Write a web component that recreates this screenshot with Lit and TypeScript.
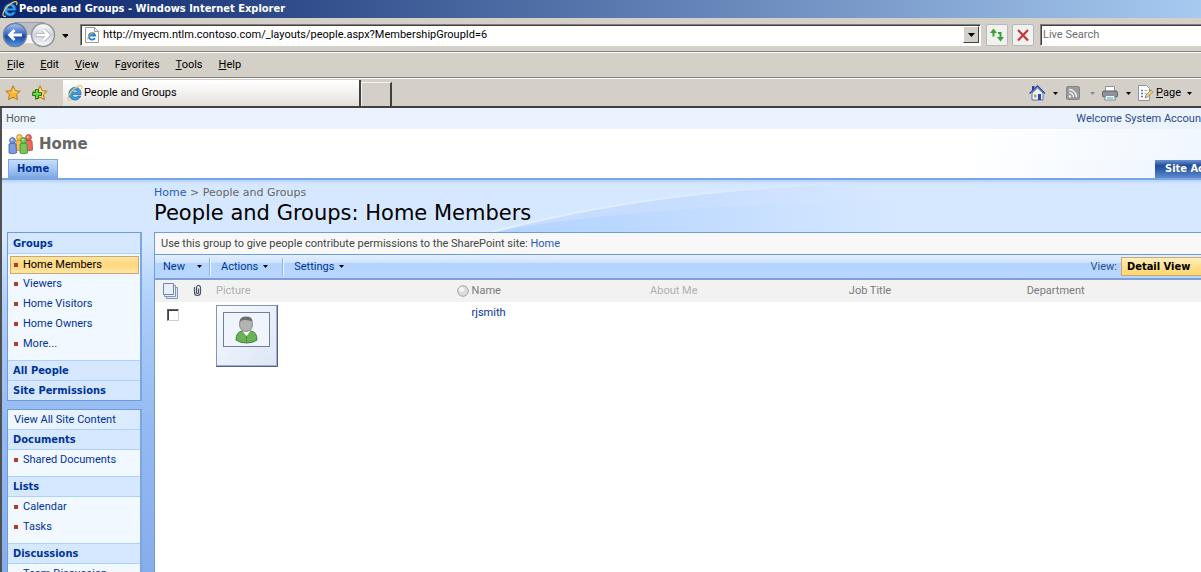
import { LitElement, html, css, svg, nothing } from "lit";
import { customElement } from "lit/decorators.js";

const ieLogo = () => html`<svg class="ie" width="16" height="16" viewBox="0 0 16 16" aria-hidden="true">
  <path d="M14 9.6H5.4c.2 3 4 3.600 5.300 1.500h3C12.400 14 10.500 15 8.300 15 4.300 15 2 12.400 2 8.700 2 5 4.700 2.400 8.300 2.400c4 0 6 3 5.700 7.200zM5.500 7.200h5.200c-.2-2.900-4.700-3-5.200 0z" fill="#35a0ec" stroke="#1558a8" stroke-width=".7"/>
  <path d="M4 15.300C1 16 .2 14 1.800 10.500 4 5.800 9.500 1 13 .7c2-.1 2.500 1.300 1.400 3.300" fill="none" stroke="#f0c860" stroke-width="1.200"/>
</svg>`;

const star = (fill: string) => svg`<path d="M8 .8l2.200 4.900 5 .5-3.700 3.500 1 5L8 12.200 3.500 14.700l1-5L.8 6.200l5-.5z" fill=${fill} stroke="#b87a20" stroke-width="1"/><path d="M8 3l1.500 3.600 3 .4-4.500.600z" fill="#ffe9a0"/>`;

const person = (x: number, y: number, light: string, dark: string) => svg`
  <path d="M${x} ${y + 7}q4-2 7 0l.5 9q-4 1.500-7.500 0z" fill=${light} stroke=${dark} stroke-width=".8"/>
  <circle cx=${x + 3.5} cy=${y + 3.5} r="2.900" fill=${light} stroke=${dark} stroke-width=".8"/>
  <circle cx=${x + 2.7} cy=${y + 2.7} r="1" fill="#fff" opacity=".6"/>`;

const GROUPS = ["Home Members", "Viewers", "Home Visitors", "Home Owners", "More..."];
const SITE = [
  { title: "Documents", items: ["Shared Documents"] },
  { title: "Lists", items: ["Calendar", "Tasks"] },
  { title: "Discussions", items: ["Team Discussion"] },
];

@customElement("browser-chrome")
class BrowserChrome extends LitElement {
  static styles = css`
    :host { display: block; background: #d4d0c8; color: #000; }
    button, input { font: inherit; color: inherit; border: 0; margin: 0; padding: 0; background: none; }
    svg { display: block; flex: none; }
    .title { height: 18px; display: flex; align-items: center; gap: 1px; padding-left: 2px; color: #fff;
      background: linear-gradient(90deg, #0a246a, #a6caf0); font: 700 11px/16px var(--bold); }
    .address { height: 33px; display: flex; align-items: center; border-bottom: 1px solid #808080; padding-left: 2px; }
    .box { display: flex; align-items: center; height: 22px; box-sizing: border-box; background: #fff;
      border: 1px solid; border-color: #808080 #fff #fff #808080; box-shadow: inset 1px 1px #404040; }
    .url { flex: 1; margin: 0 5px 0 12px; padding: 2px 1px 2px 4px; gap: 4px; }
    .url input { flex: 1; min-width: 0; }
    .drop { width: 16px; height: 17px; display: grid; place-items: center; background: #d4d0c8;
      border: 1px solid; border-color: #fff #404040 #404040 #fff; }
    .tool { width: 22px; height: 22px; margin-right: 4px; display: grid; place-items: center; background: #f1f1ee; border: 1px solid #b4b8c4; border-radius: 2px; }
    .search { width: 161px; margin-left: 2px; border-right: 0; }
    .search input { width: 100%; padding-left: 2px; }
    .search input::placeholder { color: #6d6d6d; opacity: 1; }
    .menu { height: 24px; display: flex; align-items: center; gap: 16px; padding-left: 7px; border-top: 1px solid #fff; border-bottom: 1px solid #808080; }
    .tabs { display: flex; align-items: flex-end; border-top: 1px solid #fff; border-bottom: 2px solid #404040; box-sizing: border-box; height: 30px; }
    .fav { display: flex; gap: 11px; align-self: center; padding: 0 15px 0 5px; }
    .tab { width: 298px; height: 26px; display: flex; align-items: center; gap: 1px; padding-left: 4px; box-sizing: border-box;
      background: linear-gradient(#fff, #f3f2ee 50%, #e2dfd8); border-right: 2px solid #404040; text-align: left; }
    .blank { width: 31px; height: 24px; border: 1px solid #f4f3f0; border-right: 2px solid #404040; border-bottom: 0; }
    .cmds { margin-left: auto; display: flex; align-self: center; align-items: center; padding-right: 8px; }
    .cmds button { display: flex; align-items: center; }
  `;

  render() {
    return html`
      <div class="title">${ieLogo()}<span>People and Groups - Windows Internet Explorer</span></div>
      <div class="address">
        <svg width="66" height="28" viewBox="0 0 66 28" role="img" aria-label="Back and forward">
          <defs>
            <linearGradient id="b" x2="0" y2="1"><stop stop-color="#a9c6f0" /><stop offset=".45" stop-color="#3c6cc8" /><stop offset=".55" stop-color="#1a45a4" /><stop offset="1" stop-color="#4f9cf0" /></linearGradient>
            <linearGradient id="f" x2="0" y2="1"><stop stop-color="#fff" /><stop offset=".5" stop-color="#d0d3da" /><stop offset="1" stop-color="#fbfbfd" /></linearGradient>
          </defs>
          <path d="M13 1.500h29v14h-29z" fill="#bdbdc4" stroke="#9a9ca6" />
          <path d="M13 14h29v11q-14-6-29 0z" fill="#fbfbfb" />
          <circle cx="13" cy="14" r="11.500" fill="url(#b)" stroke="#6f7f9f" stroke-width="1.500" />
          <circle cx="41" cy="14" r="11.500" fill="url(#f)" stroke="#9297a4" stroke-width="1.500" />
          <path d="M20 14H8M12.500 9L7.500 14l5 5" fill="none" stroke="#fff" stroke-width="2.800" />
          <path d="M34 14H46M41.500 9l5 5-5 5" fill="none" stroke="#a9adb8" stroke-width="4" />
          <path d="M34.500 14H46M41.500 9l5 5-5 5" fill="none" stroke="#fff" stroke-width="2.600" />
          <path d="M60 13h7l-3.500 4z" />
        </svg>
        <div class="box url">
          <svg width="14" height="16" viewBox="0 0 14 16" aria-hidden="true"><path d="M.5.5h9l4 4v11H.5z" fill="#fff" stroke="#9a9a9a" /><path d="M9.500.5v4h4" fill="none" stroke="#9a9a9a" /><path d="M9.800 11a3.200 3.200 0 1 1 .3-2.500H4" fill="none" stroke="#2380d8" stroke-width="1.900" /><path d="M2.500 12.500Q3 7 10 5" fill="none" stroke="#eeb02c" /></svg>
          <input aria-label="Address" value="http://myecm.ntlm.contoso.com/_layouts/people.aspx?MembershipGroupId=6" />
          <button class="drop" aria-label="Show addresses"><svg width="7" height="4" viewBox="0 0 7 4"><path d="M0 0h7L3.500 4z" /></svg></button>
        </div>
        <button class="tool" aria-label="Refresh"><svg width="16" height="16" viewBox="0 0 16 16"><path d="M4.500 1.500L1 6h2.500v3.500h2V6H8z" fill="#37a137" /><path d="M11.500 14.500L8 10h2.500V7H9V5h3.500v5H15z" fill="#37a137" /></svg></button>
        <button class="tool" aria-label="Stop"><svg width="14" height="14" viewBox="0 0 14 14"><path d="M2 2l10 10.500M12 2L2 12.500" stroke="#c8343c" stroke-width="2.200" /></svg></button>
        <div class="box search"><input aria-label="Search" placeholder="Live Search" /></div>
      </div>
      <nav class="menu">
        <button><u>F</u>ile</button><button><u>E</u>dit</button><button><u>V</u>iew</button><button>F<u>a</u>vorites</button><button><u>T</u>ools</button><button><u>H</u>elp</button>
      </nav>
      <div class="tabs">
        <div class="fav">
          <button aria-label="Favorites"><svg width="16" height="16" viewBox="0 0 16 16">${star("#fbb632")}</svg></button>
          <button aria-label="Add to favorites"><svg width="16" height="16" viewBox="0 0 16 16">${star("#fbc850")}<path d="M3.500 4.500h3v3h3v3h-3v3h-3v-3h-3v-3h3z" fill="#6fd04a" stroke="#1d7d1c" /></svg></button>
        </div>
        <button class="tab">${ieLogo()}<span>People and Groups</span></button>
        <button class="blank" aria-label="New tab"></button>
        <div class="cmds">
          <button aria-label="Home"><svg width="32" height="16" viewBox="0 0 32 16"><path d="M3 8v7h11V8L8.500 3z" fill="#eef2fc" stroke="#5c74ae" /><path d="M.5 8.500L8.500 1l7.500 7.500" fill="none" stroke="#2b4c9c" stroke-width="1.400" /><path d="M3 1h2.500v3L3 6z" fill="#2747a4" /><path d="M9 9h3v6H9z" fill="#2848b0" /><path d="M5 9.500h2.500v3H5z" fill="#d8963c" /><path d="M24 7h5l-2.500 3z" /></svg></button>
          <button aria-label="Feeds"><svg width="40" height="16" viewBox="0 0 40 16"><rect x="5.500" y="1.500" width="13" height="13" rx="1.500" fill="#9b9b9b" stroke="#868686" /><path d="M8 7.500a4.500 4.500 0 0 1 4.500 4.500M8 4.500a7.500 7.500 0 0 1 7.500 7.500" fill="none" stroke="#eee" stroke-width="1.500" /><circle cx="9" cy="11.500" r="1.200" fill="#eee" /><path d="M29 7h5l-2.500 3z" fill="#8a8a8a" /></svg></button>
          <button aria-label="Print"><svg width="36" height="16" viewBox="0 0 36 16"><path d="M4.500 1.500h9V7h-9z" fill="#fff" stroke="#8d93a3" /><rect x="1.500" y="6" width="15" height="6" rx="1.500" fill="#8f9199" stroke="#5c5e68" /><path d="M4.500 10.500h9l1 4.500h-11z" fill="#eaf6f4" stroke="#868e9c" /><path d="M6 13h6" stroke="#3bb5b0" /><path d="M25 7h5l-2.500 3z" /></svg></button>
          <button><svg width="19" height="16" viewBox="0 0 19 16"><path d="M1.500.5h8l3 3v12h-11z" fill="#fff" stroke="#8a93ac" /><path d="M4 5.500h2M4 8.500h2M4 11.500h2" stroke="#5676c0" stroke-width="1.500" /><path d="M7.500 5.500h3M7.500 8.500h2" stroke="#a8b4d0" /><path d="M8 13l1-3 5-5 1.800 1.800-5 5z" fill="#f4d67c" stroke="#8b7a4a" stroke-width=".8" /></svg><span><u>P</u>age</span><svg width="12" height="16" viewBox="0 0 12 16"><path d="M6 7h5L8.500 10z" /></svg></button>
        </div>
      </div>`;
  }
}

@customElement("side-nav")
class SideNav extends LitElement {
  static styles = css`
    :host { display: flex; flex-direction: column; gap: 8px; }
    .panel { border: 1px solid #6f9dd9; border-right-width: 2px; border-right-color: #7ba7e2; background: #f2f8ff; }
    h2 { margin: 0; height: 19px; padding-left: 5px; font: 700 11px/19px var(--bold); background: #d6e8ff;
      border-top: 1px solid #add1ff; border-bottom: 1px solid #add1ff; }
    h2.first { border-top: 0; height: 20px; line-height: 21px; }
    h2.solo { border-bottom: 0; }
    a { color: #003399; text-decoration: none; }
    ul { list-style: none; margin: 0; padding: 0 0 6px; }
    li { height: 20px; margin: 0 2px; display: flex; align-items: center; gap: 5px; padding-left: 4px; }
    li::before { content: ""; width: 4px; height: 4px; background: #b03c30; }
    li.on { height: 16px; margin-top: 2px; margin-right: 1px; padding-left: 3px; border: 1px solid #c9a877; background: linear-gradient(#ffe6a0, #ffd67c 50%, #ffe6a6); }
    li.on a { color: #000; }
    .all { height: 19px; line-height: 19px; padding-left: 6px; background: linear-gradient(90deg, #f2f8ff, #d9e9ff); }
  `;
  render() {
    return html`
      <nav class="panel">
        <h2 class="first"><a href="#groups">Groups</a></h2>
        <ul>${GROUPS.map((g, i) => html`<li class=${i === 0 ? "on" : nothing}><a href="#group">${g}</a></li>`)}</ul>
        <h2 class="solo"><a href="#people">All People</a></h2>
        <h2 class="solo"><a href="#permissions">Site Permissions</a></h2>
      </nav>
      <nav class="panel">
        <div class="all"><a href="#all">View All Site Content</a></div>
        ${SITE.map((s) => html`<h2><a href="#section">${s.title}</a></h2><ul>${s.items.map((t) => html`<li><a href="#item">${t}</a></li>`)}</ul>`)}
      </nav>`;
  }
}

@customElement("people-list")
class PeopleList extends LitElement {
  static styles = css`
    :host { display: flex; flex-direction: column; border: solid #6f9dd9; border-width: 1px 0 0 1px; background: #fff; }
    a { color: #2a5ac0; text-decoration: none; }
    button { font: inherit; color: #003399; border: 0; margin: 0; padding: 0; background: none; }
    .about { height: 21px; line-height: 21px; padding-left: 6px; background: #f8f8f8; color: #444; white-space: nowrap; }
    .bar { height: 23px; display: flex; align-items: center; border-top: 1px solid #6f9dd9; border-bottom: 2px solid #7d9fd3;
      background: linear-gradient(#e3efff 0, #cfe3ff 34%, #b4d4ff 36%, #b8d6ff); }
    .bar .m { display: flex; align-items: center; height: 18px; padding: 0 15px 0 8px; gap: 5px; }
    .bar .m + .m { border-left: 1px solid #eef6ff; box-shadow: -1px 0 #8fb4e8; padding-left: 10px; }
    .bar .m.new { gap: 12px; padding-right: 8px; }
    .view { margin-left: auto; color: #2c4f94; padding-right: 4px; }
    .detail { width: 80px; box-sizing: border-box; height: 19px; text-align: left; padding-left: 5px; font: 700 11px/16px var(--bold); color: #000; border: 1px solid #c9a877; border-right: 0; white-space: nowrap;
      background: linear-gradient(#ffefc0, #ffdf8c 50%, #ffd56f); }
    table { width: 100%; table-layout: fixed; border-collapse: collapse; }
    .c1 { width: 31px; } .c2 { width: 23px; } .c3 { width: 23%; } .c4 { width: 18.5%; } .c5 { width: 19%; } .c6 { width: 17%; }
    th { height: 22px; padding: 0 0 0 7px; background: #f2f2f2; color: #7a7a7a; font-weight: 400; text-align: left; }
    th.dim { color: #b0b0b0; }
    td { vertical-align: top; padding: 3px 0 0 7px; }
    svg { display: block; }
    .name { display: flex; align-items: center; gap: 3px; }
    .indent { display: inline-block; padding-left: 15px; color: #003399; }
    input { appearance: none; display: block; box-sizing: border-box; width: 12px; height: 12px; margin: 4px 0 0 5px; background: #fff;
      border: 1px solid; border-color: #606060 #d4d0c8 #d4d0c8 #606060; box-shadow: inset 1px 1px #404040; }
  `;
  arrow() {
    return html`<svg width="5" height="3" viewBox="0 0 5 3" aria-hidden="true"><path d="M0 0h5L2.500 3z" /></svg>`;
  }
  render() {
    return html`
      <div class="about">Use this group to give people contribute permissions to the SharePoint site: <a href="#home">Home</a></div>
      <div class="bar">
        <button class="m new">New ${this.arrow()}</button><button class="m">Actions ${this.arrow()}</button><button class="m">Settings ${this.arrow()}</button>
        <span class="view">View:</span><button class="detail">Detail View</button>
      </div>
      <table>
        <colgroup><col class="c1" /><col class="c2" /><col class="c3" /><col class="c4" /><col class="c5" /><col class="c6" /><col /></colgroup>
        <thead><tr>
          <th aria-label="Select"><svg width="18" height="16" viewBox="0 0 18 16"><path d="M4.500 4.500h11v11h-11z" fill="#dfe9f7" stroke="#8494b4" /><path d="M2.500 2.500h11v11h-11z" fill="#edf3fc" stroke="#8494b4" /><path d="M1.500.5h10v11h-10z" fill="#e6effb" stroke="#7184ac" /></svg></th>
          <th aria-label="Attachment"><svg width="10" height="12" viewBox="0 0 10 12"><path d="M1.500 2v5.500a3 3 0 0 0 6 0V2.500a2 2 0 0 0-4 0v5a1 1 0 0 0 2 0V3.500" fill="none" stroke="#4a5568" stroke-width="1.200" /></svg></th>
          <th class="dim">Picture</th>
          <th><span class="name"><svg width="12" height="12" viewBox="0 0 12 12"><circle cx="6" cy="6" r="5.300" fill="#dcdcdc" stroke="#a6a6a6" /><circle cx="4.500" cy="4.500" r="2.500" fill="#f5f5f5" /></svg>Name</span></th>
          <th class="dim">About Me</th><th>Job Title</th><th>Department</th>
        </tr></thead>
        <tbody><tr>
          <td><input type="checkbox" aria-label="Select rjsmith" /></td><td></td>
          <td><svg width="62" height="62" viewBox="0 0 62 62" role="img" aria-label="No photo">
            <defs><linearGradient id="p" x2="1" y2="1"><stop stop-color="#f8fbff" /><stop offset="1" stop-color="#dde5f5" /></linearGradient></defs>
            <rect x=".5" y=".5" width="61" height="61" fill="url(#p)" stroke="#8595b8" /><path d="M61.500 0v61.500H0" fill="none" stroke="#53648c" /><path d="M60.500 1v59.500H1" fill="none" stroke="#a3b0cc" />
            <rect x="7.500" y="7.500" width="46" height="34" fill="#f0f5fd" stroke="#6f7f9e" />
            <path d="M20 35q0-8 6-9h9q6 1 6 9-4 3-10.500 3T20 35z" fill="#6bb158" stroke="#3f8534" />
            <path d="M26.500 26h8L30.500 31z" fill="#fff" /><path d="M30.500 31v6" stroke="#3f8534" stroke-width=".8" />
            <ellipse cx="30" cy="19.500" rx="6.500" ry="7" fill="#b5b3b1" stroke="#888" /><path d="M23.500 17q0-5.500 6.500-5.500t6.500 5q-5-2-8-1.500-3 0-5 2z" fill="#6e6e72" />
          </svg></td>
          <td><a class="indent" href="#rjsmith">rjsmith</a></td><td></td><td></td><td></td>
        </tr></tbody>
      </table>`;
  }
}

@customElement("app-root")
class AppRoot extends LitElement {
  static styles = css`
    :host { --bold: "DejaVu Sans Condensed", "DejaVu Sans", sans-serif; display: flex; flex-direction: column; height: 100vh; overflow: hidden; font: 11px/16px Roboto, sans-serif; }
    a { text-decoration: none; color: #2a5ac0; }
    .page { flex: 1; min-height: 0; display: flex; flex-direction: column; border-left: 2px solid #505050; background: #fff; }
    .global { height: 21px; display: flex; align-items: center; justify-content: space-between; padding-left: 4px; background: #ebf3ff; white-space: nowrap; }
    .global a { color: #5a5a5a; }
    .global .user { color: #2c4a88; }
    .brand { height: 30px; display: flex; align-items: center; gap: 5px; padding-left: 6px; background: linear-gradient(90deg, #fff 80%, #f1f7ff); }
    .brand h2 { margin: 0; font: 700 15px/20px "DejaVu Sans", sans-serif; color: #666; }
    .strip { height: 19px; display: flex; justify-content: space-between; padding-left: 6px; border-bottom: 2px solid #7ba6e4; background: linear-gradient(90deg, #fff 80%, #edf5ff); }
    .tab { padding: 0 8px; box-sizing: border-box; border: 1px solid #7ba6e4; border-bottom: 0; font: 700 11px/18px var(--bold); color: #003399; background: linear-gradient(#c6dcfb, #a5c6f4 50%, #7ba6e4); }
    .actions { width: 46px; margin-top: 1px; padding: 0 0 0 10px; border: 0; font: 700 11px/18px var(--bold); color: #fff; text-align: left; white-space: nowrap; overflow: hidden; background: linear-gradient(#6a94d4 0, #24509a 30%, #2c5aa4 50%, #5c8cd0); }
    .body { flex: 1; min-height: 0; position: relative; display: grid; grid-template: 52px 1fr / 135px 1fr; column-gap: 12px; padding-left: 5px; background: linear-gradient(#b4d2fa 0, #d6e8ff 4px, #d6e8ff 60px, #b5d3fb 110px, #a8c9f7 150px, #93baf2 250px, #85aeec 390px); }
    .wave { position: absolute; left: 0; top: 0; pointer-events: none; }
    .head { grid-column: 2; position: relative; font-family: "DejaVu Sans", sans-serif; padding-top: 5px; color: #666; }
    h1 { margin: 0; font-size: 21px; line-height: 24px; font-weight: 400; color: #000; white-space: nowrap; }
    side-nav, people-list { position: relative; }
  `;
  render() {
    return html`
      <browser-chrome></browser-chrome>
      <div class="page">
        <div class="global"><a href="#home">Home</a><a class="user" href="#me">Welcome System Accoun</a></div>
        <div class="brand">
          <svg width="26" height="22" viewBox="0 0 26 22" aria-hidden="true">${person(8, 1, "#f9c04a", "#c88420")}${person(17, 1, "#ec6a5c", "#b83a34")}${person(1, 4, "#7a9ce0", "#3c5ca8")}${person(12, 4, "#78c45c", "#3c8c34")}</svg>
          <h2>Home</h2>
        </div>
        <div class="strip"><a class="tab" href="#home">Home</a><button class="actions">Site Actions</button></div>
        <div class="body">
          <svg class="wave" width="1000" height="52" viewBox="0 0 1000 52" aria-hidden="true">
            <defs>
              <linearGradient id="w" gradientUnits="userSpaceOnUse" x1="490" x2="900" y1="0" y2="0"><stop stop-color="#b4d4ff" /><stop offset=".3" stop-color="#bad7ff" /><stop offset="1" stop-color="#d6e8ff" /></linearGradient>
              <linearGradient id="v" gradientUnits="userSpaceOnUse" x1="490" x2="880" y1="0" y2="0"><stop stop-color="#c4dcff" /><stop offset=".5" stop-color="#c8deff" /><stop offset="1" stop-color="#d6e8ff" /></linearGradient>
              <linearGradient id="e" gradientUnits="userSpaceOnUse" x1="490" x2="820" y1="0" y2="0"><stop stop-color="#e2f0ff" /><stop offset=".5" stop-color="#deedff" /><stop offset="1" stop-color="#d6e8ff" /></linearGradient>
            </defs>
            <path d="M490 52Q640 12 830 4L1000 4V52z" fill="url(#v)" />
            <path d="M490 52Q640 24 950 18V52z" fill="url(#w)" />
            <path d="M490 52Q640 12 830 4" fill="none" stroke="url(#e)" stroke-width="2" />
          </svg>
          <div class="head"><div><a href="#home">Home</a> &gt; People and Groups</div><h1>People and Groups: Home Members</h1></div>
          <side-nav></side-nav>
          <people-list></people-list>
        </div>
      </div>`;
  }
}
